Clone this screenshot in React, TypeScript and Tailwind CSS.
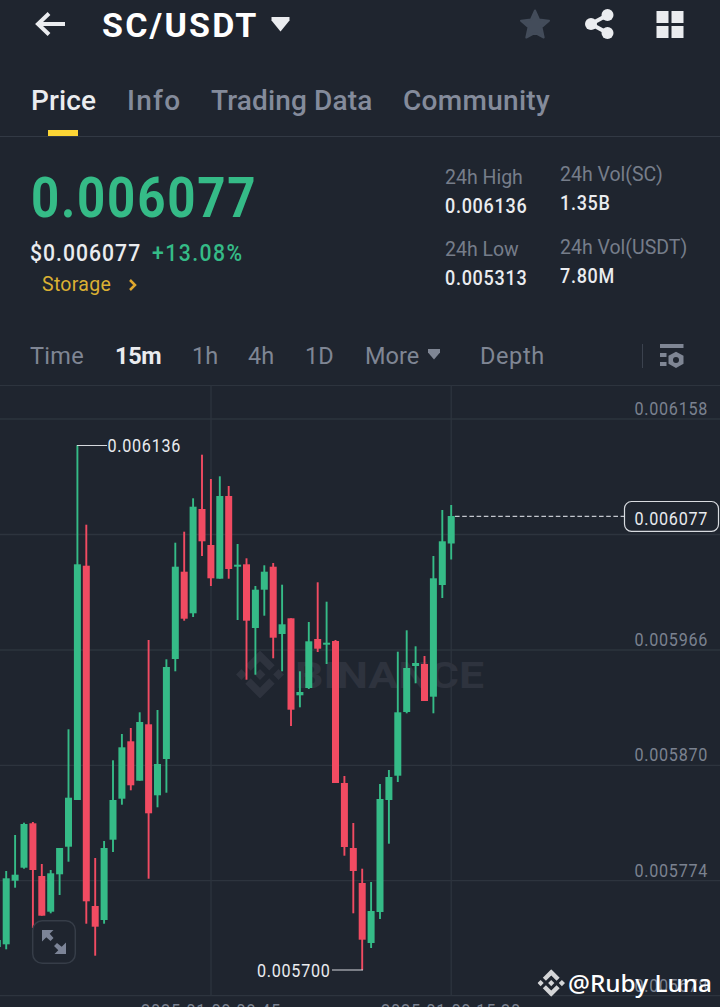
import type { ReactNode } from 'react';
import { SiBinance } from 'react-icons/si';

const GREEN = '#35bb87';
const RED = '#f14b62';

// [direction, high, body top, body bottom, low] in page pixels
type Candle = ['u' | 'd', number, number, number, number];

const CANDLES: Candle[] = [
  ['u', 938, 940, 947, 949],
  ['u', 871, 878.3, 944.3, 949.3],
  ['u', 835, 874.7, 880.7, 887.7],
  ['u', 822.7, 824, 867.7, 868.7],
  ['d', 822, 823.3, 870, 928],
  ['d', 864, 876, 915.7, 915.7],
  ['u', 870, 873.3, 911.7, 913.3],
  ['u', 848, 848, 874.3, 895],
  ['u', 729.3, 797.7, 846.7, 861.7],
  ['u', 445, 564.3, 800, 800],
  ['d', 524.7, 565.7, 901.3, 923.7],
  ['d', 858, 906, 926.7, 955.7],
  ['u', 841, 848, 920, 923.7],
  ['u', 760.3, 800, 839.7, 852],
  ['u', 734, 747.3, 798.7, 804.7],
  ['d', 728, 741.3, 785.3, 790.3],
  ['u', 712.3, 722, 780.7, 780.7],
  ['d', 640, 724.3, 813.3, 878.7],
  ['u', 710, 764, 795.3, 807.3],
  ['u', 659.3, 667, 759, 792.7],
  ['u', 542.7, 566.7, 659, 671.3],
  ['d', 531.7, 571.7, 618.7, 620.7],
  ['u', 498.3, 506.7, 613.3, 617],
  ['d', 454.7, 509, 541.3, 556],
  ['d', 479, 545, 578.3, 586],
  ['u', 476.3, 496, 578.7, 578.7],
  ['d', 486, 496, 569, 578.7],
  ['u', 544, 564.7, 566.7, 620],
  ['d', 558.3, 564.3, 620.7, 679.7],
  ['u', 586, 589.7, 628, 674.7],
  ['u', 565.3, 571.7, 589.7, 615.7],
  ['d', 563, 566.7, 637.7, 658.3],
  ['u', 584.7, 624.3, 634, 671.3],
  ['d', 618.3, 618.3, 709.7, 726],
  ['u', 671.3, 692, 695.3, 707.3],
  ['u', 622, 641.3, 688, 689],
  ['d', 582.3, 639, 648.7, 652],
  ['u', 601.7, 642.7, 644.7, 664],
  ['d', 640, 641, 783, 783],
  ['d', 776, 783, 847, 855.7],
  ['d', 823, 848, 871, 913.3],
  ['d', 868.7, 883, 939.7, 970],
  ['u', 882, 911, 943, 948],
  ['u', 784, 799, 912, 919],
  ['u', 770, 777, 800, 843.7],
  ['u', 651.7, 712.3, 775.7, 782],
  ['u', 630.3, 668, 712, 713.3],
  ['u', 646.3, 663, 666, 683.3],
  ['d', 656, 664, 701, 701],
  ['u', 556, 578.3, 696.7, 713.3],
  ['u', 510, 541.3, 585, 598],
  ['u', 505, 516, 543.5, 559.5],
];

const GRID_Y = [419, 534.5, 650, 765.3, 880.7, 995.7];

const AXIS = [
  { y: 415, label: '0.006158' },
  { y: 646, label: '0.005966' },
  { y: 761, label: '0.005870' },
  { y: 877, label: '0.005774' },
  { y: 992, label: '0.005678' },
];

const TABS = [
  { label: 'Price', cls: 'w-[96px] text-[#eaecef] tracking-[0.1px]' },
  { label: 'Info', cls: 'w-[84px] text-[#848b9b] tracking-[1.3px]' },
  { label: 'Trading Data', cls: 'w-[192px] text-[#848b9b] tracking-[0.15px]' },
  { label: 'Community', cls: 'text-[#848b9b] tracking-[0.3px]' },
];

function Stat({ label, value, cls }: { label: string; value: string; cls: string }) {
  return (
    <div className={`whitespace-nowrap ${cls}`}>
      <div className="text-[19.5px] leading-[28px] text-[#767d8a]">{label}</div>
      <div className="origin-left scale-x-90 text-[20px] font-medium leading-[28px] tracking-[0.8px] text-[#eaecef]">{value}</div>
    </div>
  );
}

function ChartText({ x, y, width, fill, children }: { x: number; y: number; width: number; fill: string; children: ReactNode }) {
  return (
    <text x={x} y={y} fill={fill} fontSize="18" letterSpacing="0.8" textLength={width} lengthAdjust="spacingAndGlyphs">
      {children}
    </text>
  );
}

function Chart() {
  return (
    <svg className="block" width="720" height="622" viewBox="0 385 720 622">
      {/* Grid */}
      <g stroke="#2d343e" strokeWidth="1.3">
        <path d="M0 385.3H720" />
        {GRID_Y.map((y) => (
          <path key={y} d={`M0 ${y}H720`} />
        ))}
        <path d="M211 385V996M451.2 385V996" />
      </g>

      {/* Watermark */}
      <SiBinance x="236" y="650.5" size={48} color="#2e333e" />
      <text x="295" y="688" fill="#2e333e" fontSize="37" fontWeight="700" textLength="189" lengthAdjust="spacingAndGlyphs">
        BINANCE
      </text>

      {/* Candles */}
      {CANDLES.map(([dir, high, top, bottom, low], i) => {
        const x = -2.7 + i * 8.9;
        const fill = dir === 'u' ? GREEN : RED;
        return (
          <g key={i} fill={fill}>
            <rect x={x - 0.95} y={high} width="1.9" height={low - high} />
            <rect x={x - 3.5} y={top} width="7" height={bottom - top} />
          </g>
        );
      })}

      {/* High / low markers */}
      <path d="M77 445.5H107M332 970H363" stroke="#d5d8dd" strokeWidth="1.2" />
      <ChartText x={107.5} y={452} width={73.5} fill="#eaecef">0.006136</ChartText>
      <ChartText x={257} y={977} width={73.5} fill="#eaecef">0.005700</ChartText>

      {/* Last price */}
      <path d="M455 516.3H624" stroke="#c3c7ce" strokeWidth="1.3" strokeDasharray="4.6 2.6" />
      <rect x="624.5" y="501.5" width="94" height="29.8" rx="7" fill="#1f252f" stroke="#d8dbe0" strokeWidth="1.2" />
      <ChartText x={634.5} y={525} width={73.5} fill="#eaecef">0.006077</ChartText>

      {AXIS.map(({ y, label }) => (
        <ChartText key={label} x={634.5} y={y} width={73.5} fill="#7b8290">{label}</ChartText>
      ))}
      <ChartText x={141} y={1016.5} width={140} fill="#7b8290">2025-01-09 08:45</ChartText>
      <ChartText x={381} y={1016.5} width={140} fill="#7b8290">2025-01-09 15:30</ChartText>

      {/* Fullscreen toggle */}
      <rect x="32.7" y="920.7" width="42.6" height="42.6" rx="9.5" fill="#1f252f" stroke="#363d48" strokeWidth="1.5" />
      <path d="M42 930h11.500l-3.800 3.800 3.800 4.200-3 3-4.200-3.800-4.300 4.300zM66 954H54.500l3.800-3.800-4.300-4.200 3-3 4.700 3.800 4.300-4.300z" fill="#7c8497" />

      {/* Author tag */}
      <SiBinance x="537.5" y="969.3" size={27.5} color="#d4d5d7" />
      <text
        x="568"
        y="991.5"
        fill="#fff"
        fontFamily="'Noto Sans', sans-serif"
        fontSize="24"
        fontWeight="500"
        textLength="144"
        lengthAdjust="spacingAndGlyphs"
      >
        @Ruby Luna
      </text>
    </svg>
  );
}

export default function App() {
  return (
    <div className="w-[720px] h-[1007px] overflow-hidden bg-[#1f252f] font-['Roboto',sans-serif]">
      {/* Header */}
      <header className="flex h-12 items-center">
        <svg className="ml-[34px] shrink-0" width="32" height="26" viewBox="0 0 32 26" fill="none" stroke="#eaecef" strokeWidth="4">
          <path d="M31 13H4M15 2.5L4 13l11 10.5" />
        </svg>
        <h1 className="ml-[36px] w-[169px] whitespace-nowrap pt-[1px] text-[34px] font-bold leading-[44px] tracking-[2.2px] text-white">
          SC/USDT
        </h1>
        <svg width="19" height="15" viewBox="0 0 19 15" fill="#eaecef">
          <path d="M.5 0h18v3.5L9.500 14.500 .5 3.500z" />
        </svg>
        <div className="ml-[229px] flex items-center">
          <svg width="32" height="32" viewBox="0 0 32 32" fill="#434c5a" stroke="#434c5a" strokeWidth="2" strokeLinejoin="round">
            <path d="M16 2.500l4 9 10 1.200-7.500 6.600 2.200 10.200L16 24.900l-8.700 4.600 2.200-10.200L2 12.700l10-1.200z" />
          </svg>
          <svg className="ml-[33px]" width="30" height="32" viewBox="0 0 30 32" fill="#eaecef">
            <path d="M23.500 7L7 16l16.500 9" fill="none" stroke="#eaecef" strokeWidth="4" />
            <circle cx="23.500" cy="7" r="6" />
            <circle cx="7" cy="16" r="6" />
            <circle cx="23.500" cy="25" r="6" />
          </svg>
          <svg className="ml-[42px]" width="28" height="27" viewBox="0 0 28 27" fill="#eaecef">
            <path d="M.5 0h12v12H.5zM15.500 0h12v12h-12zM.5 15h12v12H.5zM15.500 15h12v12h-12z" />
          </svg>
        </div>
      </header>

      {/* Tabs */}
      <nav className="flex h-[89px] border-b border-[#323944] pl-[31px] text-[28px] font-medium leading-[32px]">
        {TABS.map((tab, i) => (
          <div key={tab.label} className={`flex flex-col justify-between whitespace-nowrap pt-[37px] ${tab.cls}`}>
            <span>{tab.label}</span>
            {i === 0 && <span className="ml-[17px] h-[6px] w-[30px] bg-[#fcd535]" />}
          </div>
        ))}
      </nav>

      {/* Ticker summary */}
      <section className="flex h-[185px]">
        <div className="w-[445px] pl-[30px] pt-[28px]">
          <div className="ml-px origin-left scale-x-[0.88] text-[56px] font-bold leading-[66px] tracking-[2px] text-[#35bb87]">
            0.006077
          </div>
          <div className="flex pt-[8px] text-[23px] font-medium leading-[30px]">
            <span className="w-[122px] text-[#eaecef]">
              <span className="inline-block origin-left scale-x-[0.92] tracking-[1.1px]">$0.006077</span>
            </span>
            <span className="inline-block origin-left scale-x-[0.92] tracking-[1.6px] text-[#35bb87]">+13.08%</span>
          </div>
          <div className="flex items-center pl-[12px] pt-[3px] text-[19.5px] leading-[26px] text-[#dbb033]">
            <span className="w-[87px] tracking-[0.3px]">Storage</span>
            <svg width="8" height="12" viewBox="0 0 8 12" fill="none" stroke="#e0a82e" strokeWidth="2.500">
              <path d="M1 1l5 5-5 5" />
            </svg>
          </div>
        </div>
        <div className="w-[115px] pt-[27px]">
          <Stat label="24h High" value="0.006136" cls="h-[72px]" />
          <Stat label="24h Low" value="0.005313" cls="h-[72px]" />
        </div>
        <div className="pt-[24px]">
          <Stat label="24h Vol(SC)" value="1.35B" cls="h-[73px]" />
          <Stat label="24h Vol(USDT)" value="7.80M" cls="h-[73px]" />
        </div>
      </section>

      {/* Intervals */}
      <div className="flex h-[63px] items-center whitespace-nowrap pl-[30px] pt-[4px] text-[23.5px] leading-[30px] text-[#7f8694]">
        <span className="w-[85px] tracking-[0.3px]">Time</span>
        <span className="w-[77px] font-bold tracking-[-0.3px] text-[#eaecef]">15m</span>
        <span className="w-[56px]">1h</span>
        <span className="w-[57px]">4h</span>
        <span className="w-[60px]">1D</span>
        <span className="w-[62px]">More</span>
        <svg className="mb-[3px]" width="14" height="11" viewBox="0 0 14 11" fill="#7f8694">
          <path d="M1 0h12v3.500l-6 7-6-7z" />
        </svg>
        <span className="ml-[39px] w-[162px] tracking-[0.6px]">Depth</span>
        <span className="h-6 w-px bg-[#3b424e]" />
        <svg className="ml-[17px]" width="24" height="24" viewBox="0 0 24 24" fill="#7f8694">
          <path d="M0 0h23.500v4H0zM0 9h6.500v4H0zM0 18h6.500v4H0z" />
          <path fillRule="evenodd" d="M16 7.700l7.500 4v8L16 24l-7.500-4.300v-8zM16 13a3 3 0 100 6 3 3 0 000-6z" />
        </svg>
      </div>

      <Chart />
    </div>
  );
}
